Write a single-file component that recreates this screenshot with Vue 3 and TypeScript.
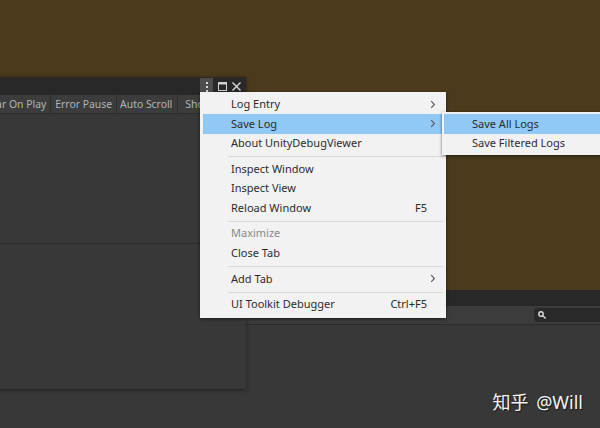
<script setup lang="ts">
type Row = { label?: string; shortcut?: string; arrow?: boolean; active?: boolean; disabled?: boolean; sep?: boolean }

const rows: Row[] = [
  { label: 'Log Entry', arrow: true },
  { label: 'Save Log', arrow: true, active: true },
  { label: 'About UnityDebugViewer' },
  { sep: true },
  { label: 'Inspect Window' },
  { label: 'Inspect View' },
  { label: 'Reload Window', shortcut: 'F5' },
  { sep: true },
  { label: 'Maximize', disabled: true },
  { label: 'Close Tab' },
  { sep: true },
  { label: 'Add Tab', arrow: true },
  { sep: true },
  { label: 'UI Toolkit Debugger', shortcut: 'Ctrl+F5' }
]
const tools = ['Clear On Play', 'Error Pause', 'Auto Scroll', 'Show Stats']
</script>

<template>
  <div class="screen">
    <div class="scene"></div>
    <div class="dock">
      <div class="dock-tabs"></div>
      <div class="dock-toolbar">
        <div class="search">
          <svg width="10" height="10" viewBox="0 0 10 10" fill="none" stroke="#d8d8d8" stroke-width="1.4">
            <circle cx="4" cy="4" r="2.2" />
            <path d="M5.8 5.8 8.6 8.6" />
          </svg>
        </div>
      </div>
      <div class="dock-body"></div>
    </div>

    <section class="window">
      <header class="titlebar">
        <span class="kebab"><i></i><i></i><i></i></span>
        <svg class="win-icon" width="11" height="11" viewBox="0 0 11 11" fill="none" stroke="#d2d2d2">
          <rect x="1.5" y="1.5" width="8" height="8" />
          <path d="M1.5 2.5h8" stroke-width="2" />
        </svg>
        <svg class="win-icon" width="11" height="11" viewBox="0 0 11 11" fill="none" stroke="#d8d8d8" stroke-width="1.4">
          <path d="M1.5 1.5l8 8M9.5 1.5l-8 8" />
        </svg>
      </header>
      <div class="toolbar">
        <span v-for="t in tools" :key="t" class="tool">{{ t }}</span>
      </div>
      <div class="list-pane"></div>
      <div class="detail-pane"></div>
    </section>

    <nav class="menu">
      <template v-for="(r, i) in rows" :key="i">
        <div v-if="r.sep" class="sep"></div>
        <div v-else class="row" :class="{ active: r.active, disabled: r.disabled }">
          <span class="label">{{ r.label }}</span>
          <span v-if="r.shortcut" class="shortcut">{{ r.shortcut }}</span>
          <svg v-if="r.arrow" class="arrow" width="6" height="9" viewBox="0 0 6 9" fill="none" stroke="#555" stroke-width="1.1">
            <path d="M1.2 1.2l3.2 3.3-3.2 3.3" />
          </svg>
        </div>
      </template>
    </nav>

    <nav class="submenu">
      <div class="row active"><span class="label">Save All Logs</span></div>
      <div class="row"><span class="label">Save Filtered Logs</span></div>
    </nav>

    <div class="watermark">知乎 @Will</div>
  </div>
</template>

<style>
html, body { margin: 0; background: #383838; }
</style>

<style scoped>
.screen {
  position: relative;
  width: 600px;
  height: 428px;
  overflow: hidden;
  display: flex;
  flex-direction: column;
  background: #383838;
  font-family: "Noto Sans", "Open Sans", sans-serif;
}
.scene { height: 290px; flex: none; background: #4c3a1d; }
.dock { flex: 1; display: flex; flex-direction: column; }
.dock-tabs { height: 16px; background: #282828; }
.dock-toolbar {
  height: 18px;
  background: #3c3c3c;
  border-bottom: 1px solid #2a2a2a;
  display: flex;
  justify-content: flex-end;
  align-items: center;
}
.search {
  width: 66px;
  height: 14px;
  background: #2a2a2a;
  border-radius: 3px 0 0 3px;
  display: flex;
  align-items: center;
  padding-left: 3px;
  box-sizing: border-box;
}
.dock-body { flex: 1; background: #383838; }

.window {
  position: absolute;
  left: -23px;
  top: 77px;
  width: 269px;
  height: 312px;
  display: flex;
  flex-direction: column;
  background: #383838;
  box-shadow: 0 1px 4px rgba(0, 0, 0, 0.45);
}
.titlebar {
  height: 18px;
  flex: none;
  background: #282828;
  display: flex;
  justify-content: flex-end;
  align-items: center;
  gap: 3px;
  padding-right: 4px;
}
.kebab {
  width: 13px;
  height: 17px;
  margin-top: 1px;
  margin-right: 1px;
  background: #4d4d4d;
  display: flex;
  flex-direction: column;
  align-items: center;
  justify-content: center;
  gap: 2px;
}
.kebab i { width: 2px; height: 2px; background: #d8d8d8; }
.win-icon { flex: none; margin-top: 1px; }
.toolbar {
  height: 18px;
  flex: none;
  background: #3c3c3c;
  border-bottom: 1px solid #2b2b2b;
  display: flex;
  align-items: center;
  white-space: nowrap;
  overflow: hidden;
}
.tool {
  font-size: 10.4px;
  color: #b4b4b4;
  padding: 0 4px;
  line-height: 18px;
  border-right: 1px solid #2e2e2e;
}
.tool:nth-child(3) { padding: 0 5px 0 3px; }
.tool:nth-child(4) { padding-left: 7px; }
.list-pane { height: 129px; flex: none; background: #383838; border-bottom: 1px solid #2b2b2b; }
.detail-pane { flex: 1; background: #383838; }

.menu, .submenu {
  position: absolute;
  box-sizing: border-box;
  background: #f2f2f2;
  box-shadow: 0 1px 3px rgba(0, 0, 0, 0.55);
  font-size: 11px;
  color: #2c2c2c;
}
.menu {
  left: 200px;
  top: 92px;
  width: 246px;
  height: 226px;
  padding: 2.5px 3px;
}
.submenu {
  left: 442px;
  top: 112px;
  width: 180px;
  padding: 2px 0 2px 2px;
}
.row {
  height: 19.5px;
  box-sizing: border-box;
  display: flex;
  align-items: center;
  padding: 0 7px 1.5px 28px;
}
.label { flex: 1; white-space: nowrap; }
.shortcut { margin-right: 9px; }
.arrow { flex: none; margin-top: 1.5px; }
.row.active { background: #90c8f6; }
.row.disabled { color: #8a8a8a; }
.sep {
  height: 6.2px;
  position: relative;
}
.sep::after {
  content: "";
  position: absolute;
  left: 25px;
  right: 0;
  top: 3px;
  height: 1px;
  background: #d9d9d9;
}
.watermark {
  position: absolute;
  right: 17px;
  bottom: 14px;
  font-size: 18px;
  word-spacing: 3px;
  line-height: 24px;
  color: #f4f4f4;
  text-shadow: 1px 1px 1px rgba(0, 0, 0, 0.6);
  font-family: "Noto Sans", "Noto Sans CJK SC", sans-serif;
  white-space: nowrap;
}
</style>
